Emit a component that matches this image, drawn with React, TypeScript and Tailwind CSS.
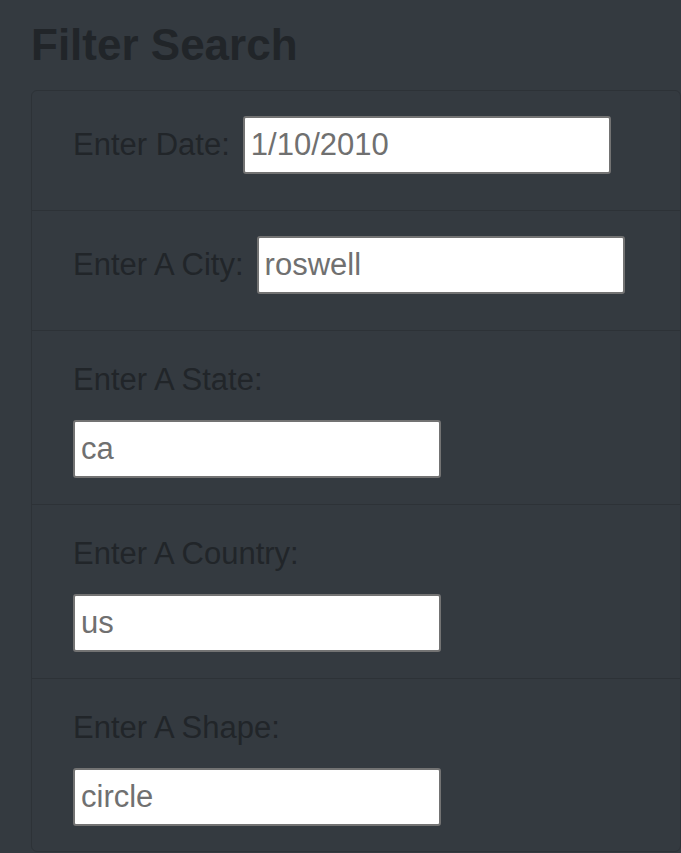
import React from "react";

type Field = { label: string; placeholder: string; inline: boolean };

const fields: Field[] = [
  { label: "Enter Date:", placeholder: "1/10/2010", inline: true },
  { label: "Enter A City:", placeholder: "roswell", inline: true },
  { label: "Enter A State:", placeholder: "ca", inline: false },
  { label: "Enter A Country:", placeholder: "us", inline: false },
  { label: "Enter A Shape:", placeholder: "circle", inline: false },
];

const inputClass =
  "w-[368px] h-[58px] shrink-0 bg-white border-2 border-[#737373] rounded-[3px] px-[6px] text-[31px] text-[#222] placeholder:text-[#707070] outline-none";

const App = () => {
  return (
    <div
      className="min-h-[853px] bg-[#343a40] pl-[31px] pt-[18px] text-[#212529]"
      style={{ fontFamily: '"Liberation Sans", Arial, sans-serif' }}
    >
      <h2 className="text-[44px] font-bold leading-[53px] mb-[19px]">Filter Search</h2>

      {/* Filter list */}
      <ul className="w-[650px] border border-[#2d3237] rounded-[6px]">
        {fields.map((f, i) => (
          <li
            key={f.label}
            className={`px-[41px] pt-[25px] ${i > 0 ? "border-t border-[#2d3237]" : ""} ${
              f.inline ? "pb-[36px] flex items-center gap-[13px]" : i === fields.length - 1 ? "pb-[25px]" : "pb-[26px]"
            }`}
          >
            {f.inline ? (
              <>
                <label className="text-[31px] leading-[36px]">{f.label}</label>
                <input className={inputClass} placeholder={f.placeholder} />
              </>
            ) : (
              <>
                <label className="block text-[31px] leading-[48px] mb-[16px]">{f.label}</label>
                <input className={`block ${inputClass}`} placeholder={f.placeholder} />
              </>
            )}
          </li>
        ))}
      </ul>
    </div>
  );
};

export default App;
